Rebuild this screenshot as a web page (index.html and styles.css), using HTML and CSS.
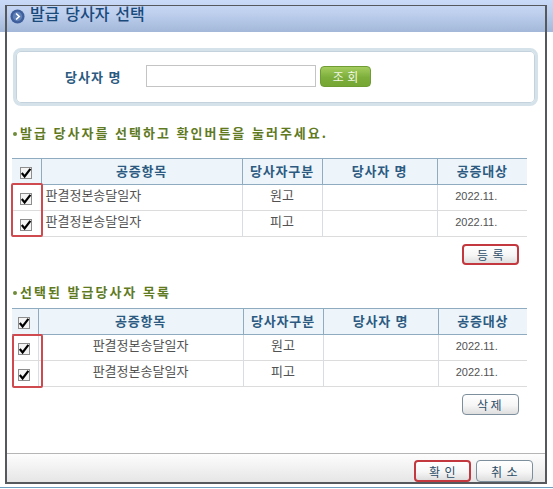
FILE: index.html
```html
<!DOCTYPE html>
<html lang="ko">
<head>
    <meta charset="UTF-8">
    <title>발급 당사자 선택</title>
    <link rel="stylesheet" href="styles.css">
</head>
<body>
    <div class="page">
        <div class="title-bar">
            <svg class="title-icon" width="15" height="15" viewBox="0 0 16 16">
                <circle cx="8" cy="8" r="7.5" fill="#3f5f9c"/>
                <circle cx="8" cy="8" r="5" fill="#5f7fb8"/>
                <path d="M6.5 4.8 L9.8 8 L6.5 11.2" fill="none" stroke="#fff" stroke-width="1.8"/>
            </svg>
            <h1>발급 당사자 선택</h1>
        </div>

        <div class="search-box">
            <label class="search-label">당사자 명</label>
            <input class="search-input" type="text">
            <button class="btn-green">조 회</button>
        </div>

        <h2 class="section-title first">발급 당사자를 선택하고 확인버튼을 눌러주세요.</h2>

        <div class="table-wrap">
            <table class="grid grid-a">
                <tr>
                    <th class="col-check"><span class="check"><svg width="12" height="12" viewBox="0 0 12 12"><path d="M1.8 6 L4.6 9.4 L10.4 1.8" fill="none" stroke="#000" stroke-width="2.2"/></svg></span></th>
                    <th>공증항목</th>
                    <th>당사자구분</th>
                    <th>당사자 명</th>
                    <th>공증대상</th>
                </tr>
                <tr>
                    <td class="col-check"><span class="check"><svg width="12" height="12" viewBox="0 0 12 12"><path d="M1.8 6 L4.6 9.4 L10.4 1.8" fill="none" stroke="#000" stroke-width="2.2"/></svg></span></td>
                    <td class="left">판결정본송달일자</td>
                    <td>원고</td>
                    <td></td>
                    <td class="date">2022.11.</td>
                </tr>
                <tr>
                    <td class="col-check"><span class="check"><svg width="12" height="12" viewBox="0 0 12 12"><path d="M1.8 6 L4.6 9.4 L10.4 1.8" fill="none" stroke="#000" stroke-width="2.2"/></svg></span></td>
                    <td class="left">판결정본송달일자</td>
                    <td>피고</td>
                    <td></td>
                    <td class="date">2022.11.</td>
                </tr>
            </table>
            <div class="red-mark mark-a"></div>
        </div>
        <div class="btn-row">
            <button class="btn btn-red">등 록</button>
        </div>

        <h2 class="section-title second">선택된 발급당사자 목록</h2>

        <div class="table-wrap">
            <table class="grid grid-b">
                <tr>
                    <th class="col-check"><span class="check"><svg width="12" height="12" viewBox="0 0 12 12"><path d="M1.8 6 L4.6 9.4 L10.4 1.8" fill="none" stroke="#000" stroke-width="2.2"/></svg></span></th>
                    <th>공증항목</th>
                    <th>당사자구분</th>
                    <th>당사자 명</th>
                    <th>공증대상</th>
                </tr>
                <tr>
                    <td class="col-check"><span class="check"><svg width="12" height="12" viewBox="0 0 12 12"><path d="M1.8 6 L4.6 9.4 L10.4 1.8" fill="none" stroke="#000" stroke-width="2.2"/></svg></span></td>
                    <td>판결정본송달일자</td>
                    <td>원고</td>
                    <td></td>
                    <td class="date">2022.11.</td>
                </tr>
                <tr>
                    <td class="col-check"><span class="check"><svg width="12" height="12" viewBox="0 0 12 12"><path d="M1.8 6 L4.6 9.4 L10.4 1.8" fill="none" stroke="#000" stroke-width="2.2"/></svg></span></td>
                    <td>판결정본송달일자</td>
                    <td>피고</td>
                    <td></td>
                    <td class="date">2022.11.</td>
                </tr>
            </table>
            <div class="red-mark mark-b"></div>
        </div>
        <div class="btn-row">
            <button class="btn btn-wide">삭제</button>
        </div>

        <div class="footer">
            <button class="btn btn-red">확 인</button>
            <button class="btn">취 소</button>
        </div>
        <div class="bottom-strip"></div>

        <div class="frame"></div>
    </div>
</body>
</html>
```

FILE: styles.css
```css
* {
    margin: 0;
    padding: 0;
    box-sizing: border-box;
}

body {
    font-family: "Noto Sans CJK KR", "Noto Sans", sans-serif;
    background: #fff;
}

.page {
    position: relative;
    width: 553px;
    height: 489px;
    overflow: hidden;
}

.frame {
    position: absolute;
    left: 5px;
    top: 5px;
    width: 542px;
    height: 479px;
    border: 2px solid #55585c;
    border-width: 1px 2px 2px 2px;
    pointer-events: none;
}

.title-bar {
    height: 32px;
    display: flex;
    align-items: flex-start;
    padding: 3px 0 0 10px;
    gap: 5px;
    background: linear-gradient(#c9daf8 0%, #bfd0ee 40%, #a3b8d9 100%);
}

.title-icon {
    margin-top: 6px;
}

.title-bar h1 {
    font-size: 16px;
    line-height: 20px;
    font-weight: 500;
    letter-spacing: 0.1px;
    word-spacing: 1px;
    color: #1a4a7c;
}

.search-box {
    margin: 16px 0 0 13px;
    width: 525px;
    height: 58px;
    display: flex;
    align-items: center;
    padding-bottom: 2px;
    border: 3px solid #d5e2ea;
    border-radius: 8px;
    box-shadow: inset 0 0 0 1px #c3d2dc;
    background: #fff;
}

.search-label {
    width: 130px;
    padding-left: 49px;
    font-size: 13px;
    font-weight: 700;
    letter-spacing: 1px;
    color: #2c5a80;
}

.search-input {
    width: 170px;
    height: 22px;
    border: 1px solid #c4c4c4;
    background: #fff;
}

.btn-green {
    width: 51px;
    height: 21px;
    margin-left: 4px;
    border: 1px solid #6f9c33;
    border-radius: 4px;
    background: linear-gradient(#a4cd5e, #7dae3c 55%, #76a735);
    color: #f2f8e4;
    font-family: inherit;
    font-size: 12px;
    line-height: 17px;
}

.section-title {
    margin-left: 13px;
    font-size: 13px;
    line-height: 16px;
    font-weight: 700;
    letter-spacing: 2px;
    color: #5f7a1f;
}

.section-title::before {
    content: "";
    display: inline-block;
    width: 4px;
    height: 4px;
    margin-right: 3px;
    border-radius: 50%;
    background: #6f8c3a;
    vertical-align: 2px;
}

.section-title.first {
    margin-top: 19px;
}

.section-title.second {
    margin-top: 19px;
}

.table-wrap {
    position: relative;
    width: 515px;
    margin-left: 12px;
}

.section-title.first + .table-wrap {
    margin-top: 17px;
}

.section-title.second + .table-wrap {
    margin-top: 8px;
}

.grid {
    width: 515px;
    table-layout: fixed;
    border-collapse: collapse;
    font-size: 13px;
    color: #525252;
}

.grid-a th:nth-child(1) { width: 29px; }
.grid-a th:nth-child(2) { width: 201px; }
.grid-b th:nth-child(1) { width: 26px; }
.grid-b th:nth-child(2) { width: 205px; }
.grid th:nth-child(3) { width: 80px; }
.grid th:nth-child(4) { width: 115px; }

.grid th {
    height: 26px;
    padding-bottom: 3px;
    background: #edf5fb;
    border-top: 1px solid #8fabc0;
    border-bottom: 1px solid #8fabc0;
    border-right: 1px solid #8fabc0;
    font-size: 13px;
    font-weight: 700;
    letter-spacing: 0.8px;
    color: #2c5a80;
}

.grid th:last-child,
.grid td:last-child {
    border-right: none;
}

.grid td {
    height: 26px;
    text-align: center;
    border-bottom: 1px solid #dcdcdc;
    border-right: 1px solid #d6dee4;
    padding-bottom: 6px;
}

.grid td.left {
    text-align: left;
    padding-left: 4px;
}

.grid th.col-check {
    padding-bottom: 1px;
}

.grid td.col-check {
    padding-bottom: 0;
}

.grid-b .col-check {
    padding-right: 2px;
}

.grid td.date {
    font-family: "Liberation Sans", sans-serif;
    font-size: 11px;
    padding-right: 12px;
    padding-bottom: 3px;
}

.check {
    display: inline-block;
    width: 12px;
    height: 12px;
    vertical-align: middle;
    border: 1px solid #8d8d8d;
    background: #f4f4f4;
    line-height: 0;
}

.check svg {
    margin: -1px 0 0 -1px;
}

.red-mark {
    position: absolute;
    border: 2px solid #cf4a4f;
    border-radius: 2px;
}

.mark-a {
    left: -1px;
    top: 25px;
    width: 32px;
    height: 54px;
}

.mark-b {
    left: 0;
    top: 26px;
    width: 31px;
    height: 54px;
}

.btn-row {
    display: flex;
    justify-content: flex-end;
    width: 519px;
    margin-top: 7px;
}

.btn {
    width: 57px;
    height: 21px;
    border: 1px solid #7d8f9c;
    border-radius: 4px;
    background: linear-gradient(#fff, #f6f6f6 55%, #dedede);
    font-family: inherit;
    font-size: 12px;
    line-height: 17px;
    letter-spacing: 0.5px;
    color: #2c4e68;
}

.btn-red {
    border: 2px solid #c2383e;
}

.btn-wide {
    letter-spacing: 2.5px;
}

.footer {
    position: absolute;
    left: 6px;
    right: 7px;
    top: 453px;
    height: 31px;
    display: flex;
    justify-content: flex-end;
    gap: 5px;
    padding: 6px 13px 0 0;
    border-top: 1px solid #b5b5b5;
    background: linear-gradient(#fdfdfd, #e4e4e4);
}

.footer .btn {
    height: 22px;
}

.bottom-strip {
    position: absolute;
    left: 0;
    right: 0;
    top: 487px;
    height: 1px;
    background: #6f9fc0;
}
```
